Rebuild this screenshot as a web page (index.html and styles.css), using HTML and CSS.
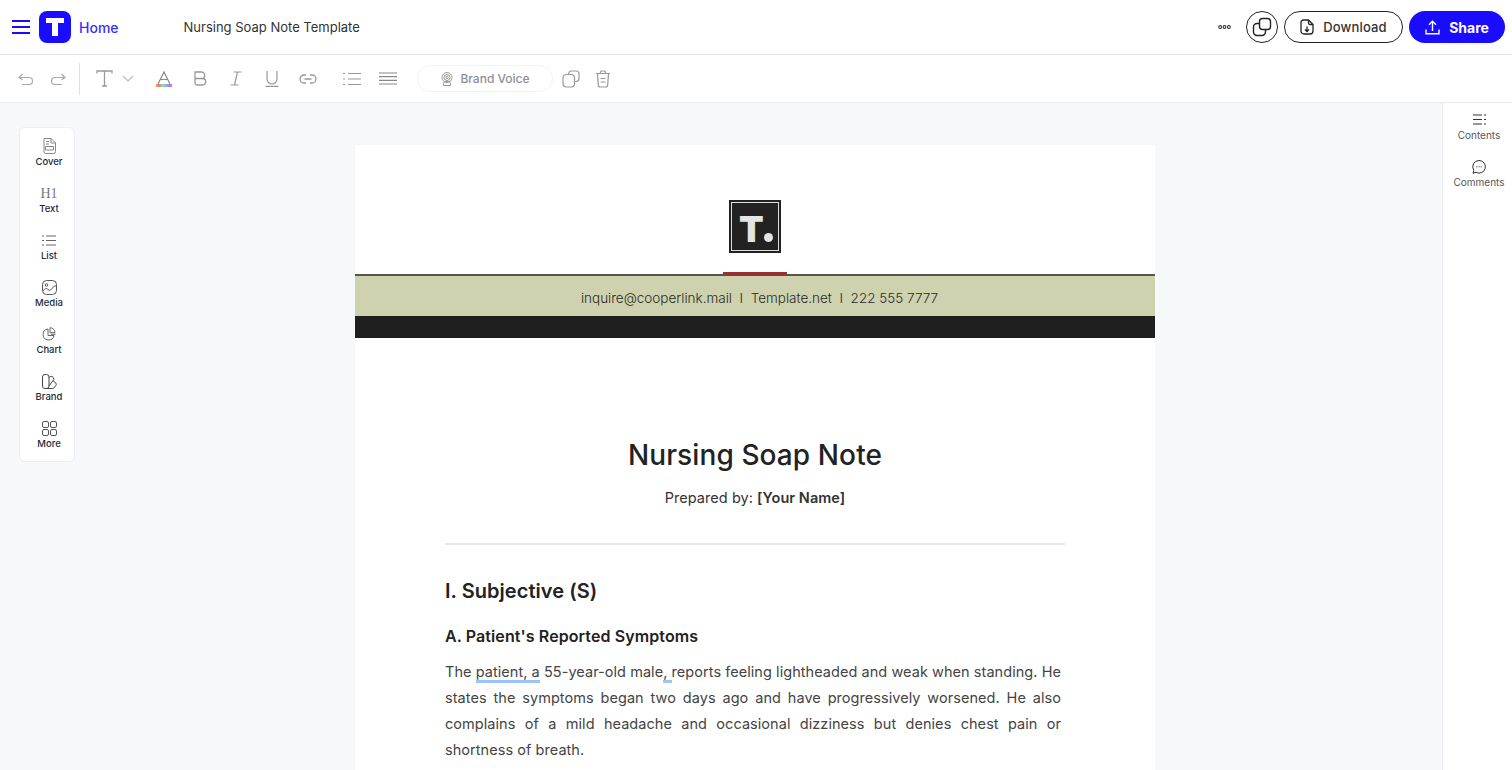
FILE: index.html
```html
<!DOCTYPE html>
<html lang="en">
<head>
  <meta charset="UTF-8" />
  <title>Nursing Soap Note Template</title>
  <meta name="viewport" content="width=device-width, initial-scale=1.0" />
  <link rel="stylesheet" href="styles.css">
</head>
<body>
  <header class="topbar">
    <button class="menu-btn" aria-label="Menu">
      <svg width="18" height="14" viewBox="0 0 18 14"><path d="M0 1h18M0 7h18M0 13h18" stroke="#1a0dff" stroke-width="2"/></svg>
    </button>
    <div class="brand-logo">
      <svg width="20" height="20" viewBox="0 0 20 20"><path d="M1 1h18v5h-6v13H7V6H1z" fill="#fff"/></svg>
    </div>
    <a class="home-link">Home</a>
    <span class="doc-name">Nursing Soap Note Template</span>
    <div class="top-actions">
      <svg class="more-dots" width="13" height="6" viewBox="0 0 14 6"><g fill="none" stroke="#222" stroke-width="1.1"><circle cx="2.3" cy="3" r="1.5"/><circle cx="7" cy="3" r="1.5"/><circle cx="11.7" cy="3" r="1.5"/></g></svg>
      <button class="round-btn" aria-label="Copy">
        <svg width="20" height="20" viewBox="0 0 20 20" fill="none" stroke="#222" stroke-width="1.4"><rect x="7.5" y="1.5" width="11" height="11" rx="3"/><path d="M7.5 6.5H5a3.500 3.500 0 0 0-3.500 3.500v5A3.500 3.500 0 0 0 5 18.500h5a3.500 3.500 0 0 0 3.500-3.500v-2.500"/></svg>
      </button>
      <button class="download-btn">
        <svg width="14" height="16" viewBox="0 0 14 16" fill="none" stroke="#222" stroke-width="1.300"><path d="M3.500 1h5l4.500 4.500V12a3 3 0 0 1-3 3H4a3 3 0 0 1-3-3V3.500A2.500 2.500 0 0 1 3.500 1z"/><path d="M8.500 1v3a1.500 1.500 0 0 0 1.500 1.500h3M7 7.500v4.500M5 10.500 7 12.500l2-2"/></svg>
        Download
      </button>
      <button class="share-btn">
        <svg width="15" height="15" viewBox="0 0 15 15" fill="none" stroke="#fff" stroke-width="1.400"><path d="M7.500 11V1.500M4 4.800 7.500 1.300 11 4.800M1 9.500v4.200h13V9.500"/></svg>
        Share
      </button>
    </div>
  </header>

  <div class="toolbar">
    <div class="tool-group history">
      <svg width="16" height="12" viewBox="0 0 16 12" fill="none" stroke="#aaa" stroke-width="1.200"><path d="M4.500 1 1 4.500 4.500 7M1 4.500h10a3.500 3.500 0 0 1 0 7H4"/></svg>
      <svg width="16" height="12" viewBox="0 0 16 12" fill="none" stroke="#aaa" stroke-width="1.200"><path d="M11.500 1 15 4.500 11.500 7M15 4.500H5a3.500 3.500 0 0 0 0 7h7"/></svg>
    </div>
    <div class="tool-group format">
      <svg class="tool-t" width="17" height="17" viewBox="0 0 17 17" fill="none" stroke="#999" stroke-width="1.300"><path d="M1 3.500V1h15v2.500M8.500 1v15M6 16h5"/></svg>
      <svg class="tool-chevron" width="12" height="7" viewBox="0 0 12 7" fill="none" stroke="#bbb" stroke-width="1.200"><path d="M1 1l5 5 5-5"/></svg>
      <span class="color-icon">
        <svg width="14" height="13" viewBox="0 0 14 13" fill="none" stroke="#888" stroke-width="1.200"><path d="M1 13 7 1l6 12M3.500 8.500h7"/></svg>
        <i class="rainbow"></i>
      </span>
      <svg width="13" height="15" viewBox="0 0 13 15" fill="none" stroke="#999" stroke-width="1.300"><path d="M1 1h6.500a3 3 0 0 1 0 6.500H1zM1 7.500h7.500a3.200 3.200 0 0 1 0 6.500H3a2 2 0 0 1-2-2z"/></svg>
      <svg width="14" height="15" viewBox="0 0 13 15" fill="none" stroke="#999" stroke-width="1.200"><path d="M4 1h8M1 14h8M8 1 5 14"/></svg>
      <svg width="14" height="16" viewBox="0 0 13 16" fill="none" stroke="#999" stroke-width="1.200"><path d="M1.500 0v8a5 5 0 0 0 10 0V0M0 15.300h13"/></svg>
      <svg class="tool-link" width="18" height="10" viewBox="0 0 18 10" fill="none" stroke="#999" stroke-width="1.300"><path d="M7 1H5a4 4 0 0 0 0 8h2M11 1h2a4 4 0 0 1 0 8h-2M5.500 5h7"/></svg>
      <svg class="tool-list" width="18" height="14" viewBox="0 0 18 14" fill="none" stroke="#999" stroke-width="1.200"><path d="M5 1.500h13M5 7h13M5 12.500h13M0 1.500h2M0 7h2M0 12.500h2"/></svg>
      <svg class="tool-lines" width="18" height="13" viewBox="0 0 18 13" fill="none" stroke="#888" stroke-width="1.200"><path d="M0 1h18M0 4.700h18M0 8.300h18M0 12h18"/></svg>
    </div>
    <div class="brand-voice">
      <svg width="14" height="14" viewBox="0 0 14 14" fill="none" stroke="#999" stroke-width="1"><circle cx="7" cy="5.500" r="5"/><circle cx="7" cy="5.500" r="3"/><circle cx="7" cy="5.500" r="1.200"/><path d="M3.500 13.500v-2a2 2 0 0 1 2-2h3a2 2 0 0 1 2 2v2z"/></svg>
      Brand Voice
    </div>
    <div class="tool-group after-voice">
      <svg width="18" height="18" viewBox="0 0 18 18" fill="none" stroke="#999" stroke-width="1.200"><rect x="6.500" y="1" width="10.500" height="10.500" rx="3"/><rect x="1" y="4.500" width="11.500" height="12.500" rx="3.500" fill="#fff"/></svg>
      <svg width="16" height="18" viewBox="0 0 16 18" fill="none" stroke="#999" stroke-width="1.200"><path d="M1 3.500h14M5 3.500 6 1h4l1 2.500M2.500 3.500l.8 11.500a2 2 0 0 0 2 2h5.400a2 2 0 0 0 2-2l.8-11.500M5.500 8.500h5M5.500 12h5"/></svg>
    </div>
  </div>

  <div class="workspace">
    <aside class="left-col">
      <nav class="side-rail">
        <div class="rail-item">
          <svg width="13" height="16" viewBox="0 0 13 16" fill="none" stroke="#888" stroke-width="1"><path d="M1 .5h7l4.500 4.500v8.500a2 2 0 0 1-2 2h-8a1.500 1.500 0 0 1-1.500-1.500zM3 3.500h3M3 6h3M2.500 8.500h8v3.500h-8zM8 .5v4.500h4.500"/></svg>
          <span>Cover</span>
        </div>
        <div class="rail-item">
          <span class="h1-glyph">H1</span>
          <span>Text</span>
        </div>
        <div class="rail-item">
          <svg width="14" height="11" viewBox="0 0 14 11" fill="none" stroke="#666" stroke-width="1.100"><path d="M4 1h10M4 5.500h10M4 10h10M0 1h2M0 5.500h2M0 10h2"/></svg>
          <span>List</span>
        </div>
        <div class="rail-item">
          <svg width="15" height="15" viewBox="0 0 15 15" fill="none" stroke="#555" stroke-width="1"><rect x=".5" y=".5" width="14" height="14" rx="4"/><circle cx="4.500" cy="5" r="1.300"/><path d="M1 11c2-3 3.500-3 5-1.500s3 .5 4-1 2.500-3 4-2.500"/></svg>
          <span>Media</span>
        </div>
        <div class="rail-item">
          <svg width="14" height="14" viewBox="0 0 14 14" fill="none" stroke="#666" stroke-width="1"><path d="M6 2a5.500 5.500 0 1 0 6 6.500H6z"/><path d="M8 .7a5 5 0 0 1 5 5H8zM9 7.300h4.500"/></svg>
          <span>Chart</span>
        </div>
        <div class="rail-item">
          <svg width="15" height="15" viewBox="0 0 15 15" fill="none" stroke="#444" stroke-width="1"><rect x=".5" y=".5" width="6.500" height="14" rx="2.500"/><path d="M7 3.500 8.500 2.500a2 2 0 0 1 2.500.8l1 2L7 12M11 6.500l2.800 2.500a2 2 0 0 1 0 2.500l-2 2.500a1.500 1.500 0 0 1-1 .5H4"/></svg>
          <span>Brand</span>
        </div>
        <div class="rail-item">
          <svg width="15" height="15" viewBox="0 0 15 15" fill="none" stroke="#555" stroke-width="1"><rect x=".5" y=".5" width="6" height="6" rx="1.500"/><rect x="8.500" y=".5" width="6" height="6" rx="1.500"/><rect x=".5" y="8.500" width="6" height="6" rx="1.500"/><rect x="8.500" y="8.500" width="6" height="6" rx="1.500"/></svg>
          <span>More</span>
        </div>
      </nav>
    </aside>

    <main class="sheet">
      <div class="letterhead">
        <div class="sheet-logo"><div class="sheet-logo-inner">T<i></i></div></div>
        <div class="accent-rule"><i></i></div>
        <div class="contact-band">inquire@cooperlink.mail &nbsp;I&nbsp; Template.net &nbsp;I&nbsp; 222 555 7777</div>
        <div class="dark-band"></div>
      </div>
      <div class="sheet-body">
        <h1>Nursing Soap Note</h1>
        <p class="prepared">Prepared by: <strong>[Your Name]</strong></p>
        <hr />
        <h2>I. Subjective (S)</h2>
        <h3>A. Patient's Reported Symptoms</h3>
        <p class="para">The <span class="flag">patient, a</span> 55-year-old male<span class="flag">, </span>reports feeling lightheaded and weak when standing. He states the symptoms began two days ago and have progressively worsened. He also complains of a mild headache and occasional dizziness but denies chest pain or shortness of breath.</p>
      </div>
    </main>

    <aside class="right-panel">
      <div class="panel-item">
        <svg width="13" height="11" viewBox="0 0 13 11" fill="none" stroke="#333" stroke-width="1.100"><path d="M0 1h9M0 5.500h9M0 10h9M11 1h2M11 5.500h2M11 10h2"/></svg>
        <span>Contents</span>
      </div>
      <div class="panel-item">
        <svg class="comment-icon" width="14" height="14" viewBox="0 0 14 14" fill="none" stroke="#333" stroke-width="1"><path d="M7 .5a6.300 6.300 0 1 1-3 11.800L1 13.300l.8-3A6.300 6.300 0 0 1 7 .5z"/><path d="M4.300 6.800h1M6.500 6.800h1M8.700 6.800h1"/></svg>
        <span>Comments</span>
      </div>
    </aside>
  </div>
</body>
</html>
```

FILE: styles.css
```css
* {
  box-sizing: border-box;
}

body {
  margin: 0;
  height: 770px;
  overflow: hidden;
  display: flex;
  flex-direction: column;
  font-family: Inter, "Liberation Sans", sans-serif;
  color: #222;
  background: #f7f8fa;
}

button {
  font-family: inherit;
  cursor: pointer;
}

/* top bar */
.topbar {
  height: 55px;
  flex: none;
  display: flex;
  align-items: center;
  padding: 0 7px 0 12px;
  background: #fff;
  border-bottom: 1px solid #e4e5ea;
}

.menu-btn {
  display: flex;
  padding: 0;
  border: none;
  background: none;
}

.brand-logo {
  width: 32px;
  height: 32px;
  margin-left: 9px;
  display: flex;
  align-items: center;
  justify-content: center;
  background: #1a0dff;
  border-radius: 8px;
}

.home-link {
  margin-left: 8px;
  font-size: 14px;
  font-weight: 500;
  color: #3a30f5;
}

.doc-name {
  margin-left: 65px;
  font-size: 13px;
  color: #333;
}

.top-actions {
  margin-left: auto;
  display: flex;
  align-items: center;
}

.more-dots {
  margin-right: 15px;
}

.round-btn {
  width: 32px;
  height: 32px;
  padding: 0;
  display: flex;
  align-items: center;
  justify-content: center;
  background: #fff;
  border: 1px solid #222;
  border-radius: 50%;
}

.download-btn {
  width: 119px;
  height: 32px;
  margin-left: 6px;
  display: flex;
  align-items: center;
  justify-content: center;
  gap: 9px;
  font-size: 13px;
  font-weight: 500;
  letter-spacing: 0.15px;
  color: #333;
  background: #fff;
  border: 1px solid #222;
  border-radius: 16px;
}

.share-btn {
  width: 96px;
  height: 32px;
  margin-left: 6px;
  display: flex;
  align-items: center;
  justify-content: center;
  gap: 9px;
  font-size: 14px;
  font-weight: 700;
  color: #fff;
  background: #1a0dff;
  border: none;
  border-radius: 16px;
}

/* format toolbar */
.toolbar {
  height: 48px;
  flex: none;
  display: flex;
  align-items: center;
  padding-left: 18px;
  background: #fff;
  border-bottom: 1px solid #e9ebef;
}

.tool-group {
  display: flex;
  align-items: center;
}

.history {
  gap: 16px;
  height: 32px;
  padding-right: 13px;
  border-right: 1px solid #dfe0e4;
}

.format {
  margin-left: 16px;
  gap: 22px;
}

.tool-chevron {
  margin-left: -13px;
}

.tool-link {
  margin-left: -2px;
}

.tool-list {
  margin-left: 4px;
}

.tool-lines {
  margin-left: -4px;
}

.color-icon {
  width: 16px;
  display: flex;
  flex-direction: column;
  align-items: center;
}

.rainbow {
  width: 16px;
  height: 3px;
  background: linear-gradient(90deg, #f7a93b, #f06fb0, #8be08b, #6fc7f0, #b07ff0, #f06fb0);
}

.brand-voice {
  width: 136px;
  height: 27px;
  margin-left: 20px;
  display: flex;
  align-items: center;
  justify-content: center;
  gap: 6px;
  font-size: 12px;
  font-weight: 500;
  color: #8e8e98;
  border: 1px solid #f3f3f5;
  border-radius: 14px;
}

.after-voice {
  margin-left: 9px;
  gap: 15px;
}

/* workspace */
.workspace {
  flex: 1;
  min-height: 0;
  display: flex;
}

.left-col {
  width: 355px;
  flex: none;
  padding: 24px 0 0 19px;
}

.side-rail {
  width: 56px;
  height: 335px;
  padding: 10px 0 0 4px;
  display: flex;
  flex-direction: column;
  gap: 17px;
  background: #fff;
  border: 1px solid #eceef2;
  border-radius: 6px;
}

.rail-item {
  flex: none;
  display: grid;
  grid-template-rows: 16px 12px;
  gap: 2px;
  justify-items: center;
  align-items: center;
  font-size: 9.5px;
  font-weight: 500;
  line-height: 12px;
  color: #1c2a3a;
}

.h1-glyph {
  font-family: "Liberation Serif", serif;
  font-size: 14px;
  font-weight: 400;
  line-height: 15px;
  color: #777;
}

/* document */
.sheet {
  width: 800px;
  flex: none;
  margin-top: 42px;
  background: #fff;
}

.letterhead {
  display: flex;
  flex-direction: column;
  align-items: center;
  padding-top: 55px;
}

.sheet-logo {
  width: 52px;
  height: 53px;
  padding: 2px;
  background: #222;
}

.sheet-logo-inner {
  height: 100%;
  padding: 5px 0 0 7px;
  display: flex;
  align-items: center;
  border: 1px solid #ddd;
  font-size: 36px;
  font-weight: 900;
  line-height: 1;
  color: #e4e4e4;
}

.sheet-logo-inner i {
  width: 9px;
  height: 9px;
  margin: 17px 0 0;
  flex: none;
  background: #e4e4e4;
  border-radius: 50%;
}

.accent-rule {
  width: 100%;
  height: 2px;
  margin-top: 21px;
  display: flex;
  justify-content: center;
  background: #55554e;
}

.accent-rule i {
  width: 64px;
  height: 5px;
  margin-top: -2px;
  background: #973232;
}

.contact-band {
  width: 100%;
  height: 40px;
  padding: 4px 0 0 9px;
  display: flex;
  align-items: center;
  justify-content: center;
  white-space: pre;
  font-size: 13.5px;
  font-weight: 300;
  color: #2a2a26;
  background: #cfd2ae;
}

.dark-band {
  width: 100%;
  height: 22px;
  background: #1f1f1f;
}

.sheet-body {
  padding: 100px 90px 0;
}

h1 {
  margin: 0;
  font-size: 28px;
  font-weight: 500;
  line-height: 34px;
  letter-spacing: 0.1px;
  text-align: center;
  color: #222;
}

.prepared {
  margin: 16px 0 0;
  font-size: 14.5px;
  line-height: 20px;
  letter-spacing: 0.05px;
  text-align: center;
  color: #333;
}

.prepared strong {
  font-weight: 600;
}

hr {
  width: 620px;
  height: 2px;
  margin: 35px 0 0;
  background: #e8e8e8;
  border: none;
}

h2 {
  margin: 33px 0 0;
  font-size: 20px;
  font-weight: 600;
  line-height: 26px;
  letter-spacing: 0.05px;
  color: #222;
}

h3 {
  margin: 22px 0 0;
  font-size: 16px;
  font-weight: 600;
  line-height: 20px;
  letter-spacing: 0.1px;
  color: #222;
}

.para {
  margin: 13px 4px 0 0;
  font-size: 14.5px;
  line-height: 26px;
  letter-spacing: 0.05px;
  text-align: justify;
  color: #444;
}

.flag {
  border-bottom: 3px solid #9cc2ff;
}

/* right panel */
.right-panel {
  width: 70px;
  margin-left: auto;
  padding: 11px 0 0 3px;
  display: flex;
  flex-direction: column;
  gap: 20px;
  background: #fff;
  border-left: 1px solid #eceef2;
}

.panel-item {
  height: 27px;
  display: flex;
  flex-direction: column;
  align-items: center;
  justify-content: space-between;
  font-size: 10px;
  line-height: 12px;
  color: #555;
}

.comment-icon {
  margin-top: -1px;
}
```
